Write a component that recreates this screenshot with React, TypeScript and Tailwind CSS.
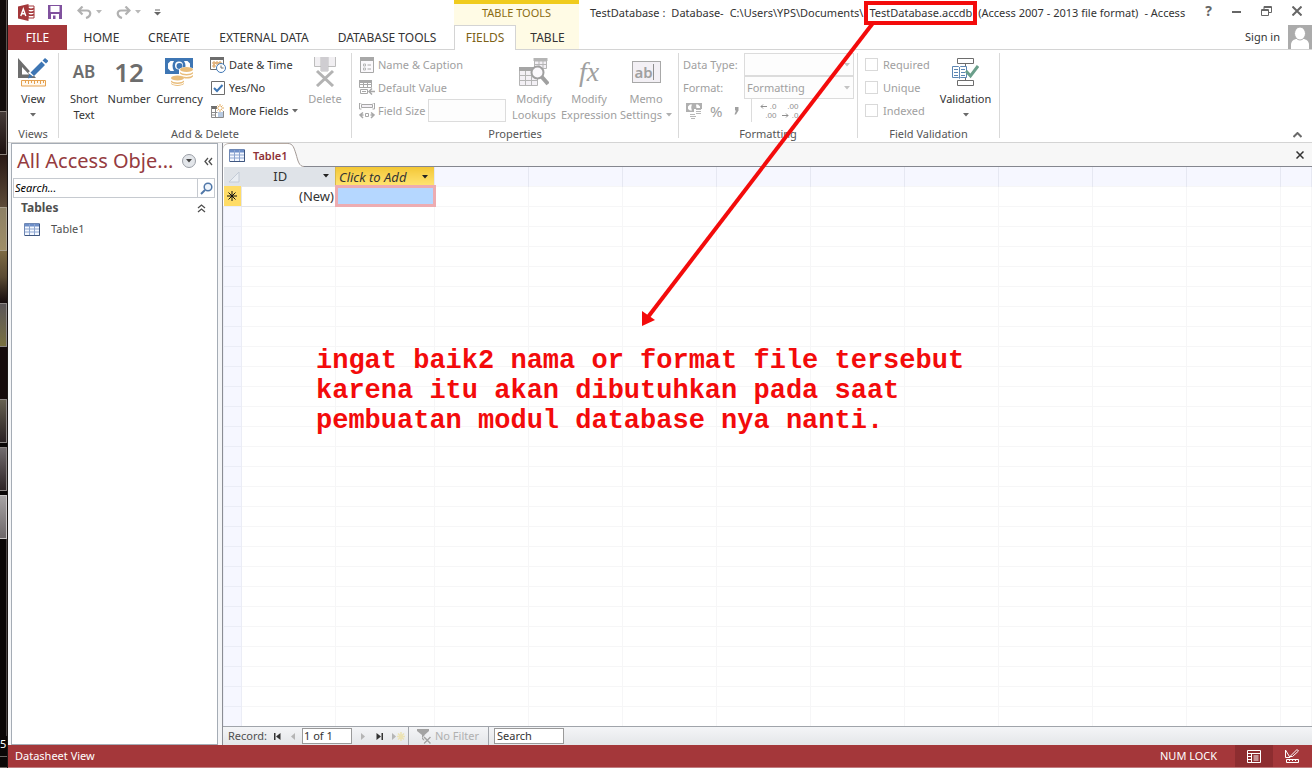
import type { ReactNode } from "react";

type IconProps = { className?: string };

const Caret = ({ className = "text-[#6a6a6a]" }: IconProps) => (
    <svg width="6" height="4" viewBox="0 0 6 4" className={`shrink-0 ${className}`}>
        <path d="M0 0h6L3 3.5z" fill="currentColor" />
    </svg>
);

/* ---------- Title bar icons ---------- */

const AccessLogo = () => (
    <svg width="17" height="17" viewBox="0 0 17 17">
        <path d="M10 2h6v12h-6z" fill="#fff" stroke="#a4373a" strokeWidth="1" />
        <path d="M10 4.5c2 1 4 1 6 0M10 7.5c2 1 4 1 6 0M10 10.5c2 1 4 1 6 0" stroke="#a4373a" strokeWidth="1.5" fill="none" />
        <path d="M0 2.5 10.5 0v17L0 14.5z" fill="#a4373a" />
        <path d="M2.8 12 5.3 5l2.5 7M3.7 9.8h3.2" stroke="#fff" strokeWidth="1.4" fill="none" />
    </svg>
);

const SaveIcon = () => (
    <svg width="14" height="14" viewBox="0 0 14 14">
        <path d="M0 0h14v14H0z" fill="#80519e" />
        <path d="M2.5 1h9v6h-9zM3 9h8v5H3z" fill="#fff" />
        <path d="M5 10.5h2.5V14H5z" fill="#80519e" />
    </svg>
);

const UndoIcon = ({ className = "" }: IconProps) => (
    <svg width="15" height="13" viewBox="0 0 15 13" className={className}>
        <path d="M5.5.5 1.5 4.5l4 4M1.5 4.5H10c4.5 0 4.5 6-1 7.5" fill="none" stroke="#b1b1b1" strokeWidth="2.2" />
    </svg>
);

/* ---------- Ribbon icons ---------- */

const ViewIcon = () => (
    <svg width="30" height="30" viewBox="0 0 30 30">
        <path d="M0 1v20h18zM4 10l7 7.5H4z" fill="#6d6d6d" fillRule="evenodd" />
        <path d="M10 16 25 1l5 4-15 14.5z" fill="#fff" />
        <path d="m12.5 15.5 11-11 3.5 3.5-11 11zM24.5 3.5 27 1l3.5 3L28 6.5zM11.5 17l3.5 3-5 1.5z" fill="#3e76b4" />
        <path d="M3.5 23.5h24V29h-24z" fill="#fff8ee" stroke="#e5a14f" />
        <path d="M7.5 24v2M10.5 24v3M13.5 24v2M16.5 24v3M19.5 24v2M22.5 24v3M25.5 24v2" stroke="#e5a14f" />
    </svg>
);

const CurrencyIcon = () => (
    <svg width="30" height="28" viewBox="0 0 30 28">
        <path d="M0 0h28v16H0z" fill="#3e76b4" />
        <path d="M3 5.5 5.500 3H9c-2 3-2 6.500 0 10H5.500L3 10.500zM25 5.500 22.500 3H19c2 3 2 6.500 0 10h3.500l2.500-2.500z" fill="#fff" />
        <circle cx="14" cy="7.500" r="4" fill="#fff" />
        <circle cx="14.500" cy="8" r="3" fill="#3e76b4" />
        <path d="M14 12c0-4 15-4 15 0v9c0 3-9 3-10 1v4c-2 3-14 3-14-1v-5c0-3 5-4 9-3z" fill="#fff" />
        <g fill="#e9bd7b">
            <ellipse cx="21.500" cy="11.500" rx="6.500" ry="2.500" />
            <path d="M15 14c2 2.500 11 2.500 13 0v1.500c-2 2.500-11 2.500-13 0zM15 17c2 2.500 11 2.500 13 0v1.500c-2 2.500-8 2.500-9 1.500z" />
            <ellipse cx="12.500" cy="20" rx="6.500" ry="2.500" />
            <path d="M6 22.500c2 2.500 11 2.500 13 0V24c-2 2.500-11 2.500-13 0zM6 25c2 2.500 11 2.500 13 0v.8c-2 2.800-11 2.800-13 0z" />
        </g>
    </svg>
);

const DateIcon = () => (
    <svg width="16" height="16" viewBox="0 0 16 16">
        <path d="M.5.5h13v12H.5z" fill="#fff" stroke="#6d6d6d" />
        <path d="M0 0h14v3H0z" fill="#6d6d6d" />
        <path d="M3 5h2v2H3zM6 5h2v2H6zM9 5h2v2H9zM3 8h2v2H3z" fill="none" stroke="#d89b54" />
        <circle cx="11" cy="11" r="4.5" fill="#fff" stroke="#3e76b4" />
        <path d="M11 8.5V11h2.5" fill="none" stroke="#6d6d6d" />
    </svg>
);

const YesNoIcon = () => (
    <svg width="14" height="14" viewBox="0 0 14 14">
        <path d="M.5.5h13v13H.5z" fill="#fff" stroke="#6d6d6d" />
        <path d="m3 7 3 3 5.5-6" fill="none" stroke="#3e76b4" strokeWidth="2" />
    </svg>
);

const MoreFieldsIcon = () => (
    <svg width="14" height="14" viewBox="0 0 14 14">
        <path d="M.5 2.5h12v11H.5z" fill="#fff" />
        <path d="M0 2h6v3H0z" fill="#6d6d6d" />
        <path d="M.5 3v10.5h12V7M.5 8.5h6M4.5 5v8M.5 11h4" fill="none" stroke="#8a8a8a" />
        <path d="M7 8h5v5H7z" fill="#b9cbe2" />
        <path d="M9 0v8M5.5 4H13M6.5 1.5l5 5M11.5 1.5l-5 5" stroke="#e3ac60" />
        <circle cx="9" cy="4" r="1.5" fill="#fff" />
    </svg>
);

const DeleteIcon = () => (
    <svg width="22" height="30" viewBox="0 0 22 30">
        <path d="M.5 0v9.5h21V0M7 0v14h7V0" fill="#f1eff2" stroke="#bdbdbd" />
        <path d="M7 0h7v14H7z" fill="#cfcdd1" />
        <path d="m3 14 16 15M19 14 3 29" stroke="#b3b3b3" strokeWidth="3" />
    </svg>
);

const CaptionIcon = () => (
    <svg width="14" height="16" viewBox="0 0 14 16">
        <path d="M.5.5h13v15H.5z" fill="#fbf9fc" stroke="#a8a8a8" />
        <path d="M0 0h14v4H0z" fill="#a8a8a8" />
        <path d="M3.5 7h2v2h-2zM3.5 11h2v2h-2z" fill="#fff" stroke="#a8a8a8" strokeWidth=".8" />
        <path d="M7.5 8H11M7.5 12H11" stroke="#a8a8a8" />
    </svg>
);

const DefaultValueIcon = () => (
    <svg width="16" height="15" viewBox="0 0 16 15">
        <path d="M.5 1.5h12v6H.5zM.5 4.5h12M4.5 1v6M8.5 1v6" fill="none" stroke="#a8a8a8" />
        <path d="M0 0h13v3H0z" fill="#a8a8a8" />
        <path d="M1.5 9.5h7v4h-7zM3 11.5h4" fill="#fff" stroke="#a8a8a8" />
        <path d="M16 11.5h-5M13 8.5l-3 3 3 3" fill="none" stroke="#a8a8a8" strokeWidth="1.5" />
    </svg>
);

const FieldSizeIcon = () => (
    <svg width="16" height="16" viewBox="0 0 16 16">
        <path d="M2.5 0H.5v6h2M13.5 0h2v6h-2" fill="none" stroke="#a8a8a8" />
        <path d="M2.5 1.5h11v3h-11z" fill="#f3f0f5" stroke="#a8a8a8" />
        <path d="M4 9.5 1 12l3 3M12 9.5l3 2.5-3 3M1 12h3.5M11.5 12H15" fill="none" stroke="#a8a8a8" strokeWidth="1.5" />
        <path d="M6.5 10.5h3v3h-3z" fill="#fff" stroke="#a8a8a8" />
    </svg>
);

const LookupIcon = () => (
    <svg width="30" height="28" viewBox="0 0 30 28">
        <path d="M15.5.5h12v10h-12z" fill="#f3f0f5" stroke="#b5b5b5" />
        <path d="M15 0h13v3H15zM20 3v7M24 3v7M15 6.5h12" fill="#b5b5b5" stroke="#b5b5b5" />
        <path d="M.5 9.5h18v18H.5z" fill="#f3f0f5" stroke="#b5b5b5" />
        <path d="M0 9h18v4H0z" fill="#a5a5a5" />
        <path d="M6.5 13v14M12.5 13v14M0 17.5h18M0 22.5h18" stroke="#b5b5b5" />
        <path d="m22 18 7 8" stroke="#a0a0a0" strokeWidth="4" />
        <circle cx="18.5" cy="14.5" r="6" fill="#fbf9fc" stroke="#a0a0a0" strokeWidth="2" />
    </svg>
);

const MoneySmallIcon = () => (
    <svg width="16" height="16" viewBox="0 0 16 16">
        <path d="M0 0h16v9H0z" fill="#b0b0b0" />
        <path d="M2 3.5 4 1.5h2c-1 2-1 4 0 6H4L2 6zM10 1.5h2l2 2V5h-3.5z" fill="#fff" />
        <path d="M8 6h8v8H8z" fill="#fff" />
        <path d="M10 6.5h5M10 8.5h5M10 10.5h5M4 11.5h5M4 13.5h6M5 15.5h4" stroke="#b8b8b8" />
    </svg>
);

const ValidationIcon = () => (
    <svg width="27" height="28" viewBox="0 0 27 28">
        <path d="M5.5.5h16v5h-16zM5.5 22.5h16v5h-16z" fill="#fff" stroke="#6d6d6d" />
        <path d="M13.5 6v3M13.5 20v3" stroke="#6d6d6d" />
        <path d="M.5 8.5h6l1 1 1-1h6v11h-6l-1 1-1-1h-6z" fill="#fff" stroke="#5d87b3" />
        <path d="M7.5 9v11M2 11.5h4M2 14.5h4M2 17.5h4M9 11.5h4M9 14.5h4M9 17.5h4" stroke="#5d87b3" />
        <path d="m14 13 4.5 5L26 8" fill="none" stroke="#6b9f8b" strokeWidth="3" />
    </svg>
);

const Arrow = ({ flip = false }: { flip?: boolean }) => (
    <svg width="7" height="5" viewBox="0 0 7 5" className={flip ? "rotate-180" : ""}>
        <path d="M7 2.5H1M3 .5l-2 2 2 2" fill="none" stroke="#8f8f8f" />
    </svg>
);

const DecimalIcon = ({ more = false }: { more?: boolean }) => (
    <span className="flex w-4 flex-col font-['Liberation_Sans',sans-serif] text-[8px] leading-[9px] text-[#8f8f8f]">
        <span className="flex items-center justify-between">
            {more ? <i className="w-1" /> : <Arrow />}
            {more ? ".00" : ".0"}
        </span>
        <span className="flex items-center justify-between">
            {more ? <Arrow flip /> : <i className="w-1" />}
            {more ? ".0" : ".00"}
        </span>
    </span>
);

/* ---------- Object icons ---------- */

const TableIcon = () => (
    <svg width="16" height="13" viewBox="0 0 16 13" className="shrink-0">
        <path d="M.5.5h15v12H.5z" fill="#f4f8ff" stroke="#6f88b5" />
        <path d="M1 1h14v2.5H1z" fill="#6d8fc9" />
        <path d="M1 6h14M1 9h14M5.5 1v11M10.5 1v11" stroke="#8ba4cf" />
        <path d="M15.5 1v11.5H1" fill="none" stroke="#3f567f" />
    </svg>
);

const DoubleChevron = ({ className = "" }: IconProps) => (
    <svg width="9" height="9" viewBox="0 0 9 9" className={className}>
        <path d="M4 1 1 4.5 4 8M8 1 5 4.5 8 8" fill="none" stroke="#4f4f4f" strokeWidth="1.3" />
    </svg>
);

const FilterIcon = () => (
    <svg width="15" height="15" viewBox="0 0 15 15">
        <path d="M0 0h12v2L7.5 6v6L5 10V6L0 2z" fill="#a3a3a3" />
        <path d="m6.5 7.5 7 7M13.5 7.5l-7 7" stroke="#f0f1f3" strokeWidth="3" />
        <path d="m7 8 6.5 6.5M13.5 8 7 14.5" stroke="#a3a3a3" strokeWidth="1.5" />
    </svg>
);

/* ---------- Ribbon parts ---------- */

const RibbonGroup = ({ label, className, children }: { label: string; className: string; children: ReactNode }) => (
    <section className={`flex h-[85px] shrink-0 flex-col border-r border-[#d9d9d9] ${className}`}>
        <div className="flex h-[73px]">{children}</div>
        <h2 className="h-3 text-center leading-4 text-[#555]">{label}</h2>
    </section>
);

type BigButtonProps = { icon: ReactNode; lines: string[]; className: string; caret?: "below" | "inline" };

const BigButton = ({ icon, lines, className, caret }: BigButtonProps) => (
    <button className={`flex shrink-0 flex-col items-center leading-4 whitespace-nowrap ${className}`}>
        <span className="flex h-[38px] items-center justify-center">{icon}</span>
        {lines.map((line, i) => (
            <span key={line} className="flex items-center gap-1">
                {line}
                {caret === "inline" && i === lines.length - 1 && <Caret className="text-[#b0b0b0]" />}
            </span>
        ))}
        {caret === "below" && <span className="flex h-4 items-center"><Caret /></span>}
    </button>
);

const SmallButton = ({ icon, label, caret }: { icon: ReactNode; label: string; caret?: boolean }) => (
    <button className="flex h-[23px] items-center gap-[3px] whitespace-nowrap">
        <span className="flex w-4 justify-center">{icon}</span>
        {label}
        {caret && <Caret />}
    </button>
);

const FormatSelect = ({ id, value }: { id: string; value: string }) => (
    <span className="relative flex h-[23px] w-[110px] items-center">
        <select id={id} defaultValue={value} className="h-full w-full appearance-none border border-[#dcdcdc] bg-[#fdfdfd] px-[2px] text-[#a0a0a0]">
            <option>{value}</option>
        </select>
        <span className="pointer-events-none absolute right-1"><Caret className="text-[#c4c4c4]" /></span>
    </span>
);

/* ---------- Page sections ---------- */

const Taskbar = () => (
    <aside className="flex w-2 shrink-0 flex-col overflow-hidden border-r border-[#1b1615] bg-[#0a0606] text-white">
        <div className="h-[111px] border-r border-[#5c5450] bg-[#120c0b]" />
        <div className="h-11 border border-l-0 border-[#8b827c] bg-linear-to-b from-[#453b38] to-[#1d1110]" />
        <div className="h-[52px] bg-linear-to-b from-[#2a1a16] to-[#5d4b38]" />
        <div className="h-11 border border-l-0 border-[#aaa08d] bg-linear-to-b from-[#8d8065] to-[#a08f68]" />
        <div className="h-[52px] bg-linear-to-b from-[#7d6a43] via-[#5a4a33] to-[#160c0d]" />
        <div className="h-11 border border-l-0 border-[#8d8786] bg-linear-to-b from-[#5b5557] to-[#7a7140]" />
        <div className="h-[52px] bg-[#150b0c]" />
        <div className="h-11 border border-l-0 border-[#8d8786] bg-linear-to-b from-[#666050] to-[#2a2123]" />
        <div className="mt-1 h-11 border border-l-0 border-[#8d8786] bg-linear-to-b from-[#726c6e] to-[#2e2426]" />
        <div className="mt-1 h-11 border border-l-0 border-[#c9c5c5] bg-linear-to-b from-[#a7a3a4] to-[#6e686a]" />
        <div className="flex-1 border-r border-[#4c4645]" />
        <div className="h-5 leading-4">5</div>
        <div className="h-3 border-y border-[#6b6563]" />
    </aside>
);

const Header = () => (
    <header className="flex h-[50px] shrink-0 whitespace-nowrap">
        <div className="flex w-[446px] shrink-0 flex-col">
            <div className="flex h-6 items-center pl-[10px]">
                <AccessLogo />
                <button aria-label="Save" className="ml-[13px]"><SaveIcon /></button>
                <button aria-label="Undo" className="ml-[15px] flex items-center gap-1">
                    <UndoIcon /><Caret className="text-[#b8b8b8]" />
                </button>
                <button aria-label="Redo" className="ml-[14px] flex items-center gap-1">
                    <UndoIcon className="-scale-x-100" /><Caret className="text-[#b8b8b8]" />
                </button>
                <button aria-label="Customize toolbar" className="ml-[13px]">
                    <svg width="7" height="7" viewBox="0 0 7 7"><path d="M1 1h5" stroke="#666" /><path d="M0 3h7L3.500 6.500z" fill="#666" /></svg>
                </button>
            </div>
            <nav className="mt-px flex h-[25px] text-[12px]">
                <button className="w-[59px] bg-[#a4373a] text-white">FILE</button>
                <div className="flex flex-1 border-b border-[#d4d4d4] pt-[2px]">
                    <button className="w-[69px]">HOME</button>
                    <button className="w-[66px]">CREATE</button>
                    <button className="w-[124px]">EXTERNAL DATA</button>
                    <button className="w-[122px]">DATABASE TOOLS</button>
                </div>
            </nav>
        </div>
        <div className="flex w-[125px] shrink-0 flex-col border-t-4 border-[#f0cb1d] bg-[#fffbe5]">
            <div className="flex h-[21px] items-center justify-center pb-[3px] text-[#8b6c12]">TABLE TOOLS</div>
            <div className="flex h-[25px] text-[12px]">
                <button className="w-[62px] border border-b-0 border-[#d4d4d4] bg-white text-[#7d6216]">FIELDS</button>
                <button className="flex-1 border-b border-[#d4d4d4] pt-[2px]">TABLE</button>
            </div>
        </div>
        <div className="flex min-w-0 flex-1 flex-col border-b border-[#d4d4d4]">
            <div className="flex h-[25px] items-center justify-between pr-[10px] pl-[11px]">
                <h1 className="flex gap-[6px]">
                    <span>TestDatabase :</span>
                    <span>Database-</span>
                    <span>C:\Users\YPS\Documents\</span>
                    <span className="relative">
                        TestDatabase.accdb
                        <span className="absolute -inset-x-[5px] -inset-y-1 border-4 border-[#f30b0b]" />
                    </span>
                    <span>(Access 2007 - 2013 file format)</span>
                    <span>- Access</span>
                </h1>
                <div className="flex items-center gap-5 pb-[3px] text-[#666]">
                    <button aria-label="Help" className="text-[14px] leading-4 font-bold">?</button>
                    <button aria-label="Minimize">
                        <svg width="9" height="10" viewBox="0 0 9 10"><path d="M0 6h9" stroke="currentColor" strokeWidth="2" /></svg>
                    </button>
                    <button aria-label="Restore">
                        <svg width="11" height="10" viewBox="0 0 11 10"><path d="M.5 3.5h7v6h-7zM3 3V.5h7.5v6H8M.5 4.5h7M3 1.5h7" fill="none" stroke="currentColor" /></svg>
                    </button>
                    <button aria-label="Close">
                        <svg width="10" height="10" viewBox="0 0 10 10"><path d="m.5.5 9 9M9.500.500l-9 9" stroke="currentColor" strokeWidth="2" /></svg>
                    </button>
                </div>
            </div>
            <div className="flex h-6 items-center justify-end gap-2">
                <a href="#signin">Sign in</a>
                <svg width="24" height="24" viewBox="0 0 24 24">
                    <path d="M0 0h24v24H0z" fill="#ababab" />
                    <path d="M3 24v-4c0-4 3-6 6-6h6c3 0 6 2 6 6v4z" fill="#fff" />
                    <ellipse cx="12" cy="8.5" rx="5.5" ry="6.5" fill="#fff" stroke="#ababab" />
                </svg>
            </div>
        </div>
    </header>
);

const Ribbon = () => (
    <div className="flex h-[93px] shrink-0 border-b border-[#d4d4d4] pt-[3px]">
        <RibbonGroup label="Views" className="w-[51px]">
            <BigButton icon={<ViewIcon />} lines={["View"]} caret="below" className="w-[50px]" />
        </RibbonGroup>

        <RibbonGroup label="Add & Delete" className="w-[293px]">
            <BigButton icon={<span className="text-[17px] font-semibold text-[#6d6d6d]">AB</span>} lines={["Short", "Text"]} className="w-[50px]" />
            <BigButton icon={<span className="text-[26px] font-semibold text-[#6d6d6d]">12</span>} lines={["Number"]} className="w-10" />
            <BigButton icon={<CurrencyIcon />} lines={["Currency"]} className="w-[61px]" />
            <div className="w-[89px]">
                <SmallButton icon={<DateIcon />} label="Date & Time" />
                <SmallButton icon={<YesNoIcon />} label="Yes/No" />
                <SmallButton icon={<MoreFieldsIcon />} label="More Fields" caret />
            </div>
            <BigButton icon={<DeleteIcon />} lines={["Delete"]} className="w-[52px] text-[#a0a0a0]" />
        </RibbonGroup>

        <RibbonGroup label="Properties" className="w-[327px] text-[#a0a0a0]">
            <div className="w-[152px] pl-[7px]">
                <SmallButton icon={<CaptionIcon />} label="Name & Caption" />
                <SmallButton icon={<DefaultValueIcon />} label="Default Value" />
                <div className="flex h-[23px] items-center gap-[3px] whitespace-nowrap">
                    <span className="w-4"><FieldSizeIcon /></span>
                    <label htmlFor="field-size" className="w-[50px]">Field Size</label>
                    <input id="field-size" className="h-[23px] w-[78px] shrink-0 border border-[#dcdcdc] bg-[#fdfdfd]" />
                </div>
            </div>
            <BigButton icon={<LookupIcon />} lines={["Modify", "Lookups"]} className="w-[60px]" />
            <BigButton
                icon={<span className="font-['Liberation_Serif',serif] text-[28px] italic">fx</span>}
                lines={["Modify", "Expression"]}
                className="w-[50px]"
            />
            <BigButton
                icon={<span className="flex h-[22px] w-[29px] items-center border border-[#a8a8a8] bg-[#f3f0f5] px-[2px] text-[15px] font-semibold">ab<i className="h-4 w-px bg-[#8f8f8f]" /></span>}
                lines={["Memo", "Settings"]}
                caret="inline"
                className="w-16"
            />
        </RibbonGroup>

        <RibbonGroup label="Formatting" className="w-[179px] text-[#a0a0a0]">
            <div className="flex flex-col pl-1">
                <div className="flex items-center">
                    <label htmlFor="data-type" className="w-[61px]">Data Type:</label>
                    <FormatSelect id="data-type" value="" />
                </div>
                <div className="flex items-center">
                    <label htmlFor="format" className="w-[61px]">Format:</label>
                    <FormatSelect id="format" value="Formatting" />
                </div>
                <div className="flex h-[23px] items-center pl-[3px]">
                    <button aria-label="Currency format"><MoneySmallIcon /></button>
                    <button className="ml-2 text-[15px] leading-4">%</button>
                    <button aria-label="Comma format" className="ml-3">
                        <svg width="5" height="9" viewBox="0 0 5 9"><path d="M1 1h3.500v3.500L2 8.500H.5L2 4.500H1z" fill="#a0a0a0" /></svg>
                    </button>
                    <i className="ml-3 h-[23px] w-px bg-[#dcdcdc]" />
                    <button aria-label="Increase decimals" className="ml-2"><DecimalIcon /></button>
                    <button aria-label="Decrease decimals" className="ml-[6px]"><DecimalIcon more /></button>
                </div>
            </div>
        </RibbonGroup>

        <RibbonGroup label="Field Validation" className="w-[142px]">
            <div className="w-[75px] pl-[7px] text-[#a0a0a0]">
                {["Required", "Unique", "Indexed"].map((name) => (
                    <label key={name} className="flex h-[23px] items-center gap-[5px]">
                        <input type="checkbox" className="size-[13px] appearance-none border border-[#d9d9d9]" />
                        {name}
                    </label>
                ))}
            </div>
            <BigButton icon={<ValidationIcon />} lines={["Validation"]} caret="below" className="w-[65px]" />
        </RibbonGroup>

        <button aria-label="Collapse the ribbon" className="mr-[10px] mb-1 ml-auto self-end">
            <svg width="9" height="6" viewBox="0 0 9 6"><path d="m.5 5 4-4 4 4" fill="none" stroke="#6a6a6a" strokeWidth="2" /></svg>
        </button>
    </div>
);

const NavigationPane = () => (
    <nav className="flex w-[214px] shrink-0 bg-[#f4f5f7] pr-1 pl-[3px]">
        <div className="flex flex-1 flex-col border border-[#a5acb5] bg-white pr-[2px] pl-px whitespace-nowrap">
            <div className="flex h-[34px] items-center pr-[2px] pl-1">
                <h2 className="flex-1 text-[20px] leading-8 text-[#953b40]">All Access Obje...</h2>
                <button aria-label="Select category" className="flex size-[14px] items-center justify-center rounded-full border border-[#9a9ea6] bg-[#e3e6ea]">
                    <Caret className="text-[#444]" />
                </button>
                <button aria-label="Close pane" className="ml-2"><DoubleChevron /></button>
            </div>
            <div className="flex h-5 border border-[#c6cad0]">
                <input aria-label="Search" placeholder="Search..." className="min-w-0 flex-1 px-px italic placeholder:text-black" />
                <button aria-label="Search objects" className="flex w-[17px] items-center justify-center border-l border-[#c6cad0]">
                    <svg width="13" height="13" viewBox="0 0 13 13">
                        <circle cx="8" cy="5" r="3.800" fill="#eef4fb" stroke="#5077a8" strokeWidth="1.5" />
                        <path d="M5 8 1 12" stroke="#5077a8" strokeWidth="2" />
                    </svg>
                </button>
            </div>
            <button className="flex h-5 items-center justify-between pr-[9px] pl-2 text-[12px] font-bold text-[#4f4f4f]">
                Tables
                <DoubleChevron className="rotate-90" />
            </button>
            <a href="#table1" className="flex h-[22px] items-center gap-[11px] pl-[11px] text-[#4f4f4f]">
                <TableIcon />
                Table1
            </a>
        </div>
    </nav>
);

const emptyColumns = Array.from({ length: 10 }, (_, i) => i);
const emptyRows = Array.from({ length: 60 }, (_, i) => i);

const Datasheet = () => (
    <div className="min-h-0 flex-1 basis-0 overflow-hidden">
        <table className="w-full table-fixed border-collapse">
            <colgroup>
                <col className="w-[18px]" />
                <col className="w-[94px]" />
                <col className="w-[99px]" />
                {emptyColumns.map((c) => (
                    <col key={c} className={c < 9 ? "w-[94px]" : ""} />
                ))}
            </colgroup>
            <thead>
                <tr className="h-[19px] bg-[#f6f7ff]">
                    <th className="bg-[#dfe3e8] p-0">
                        <svg width="12" height="12" viewBox="0 0 12 12" className="ml-1"><path d="M11 1v10H1z" fill="#e9edf2" stroke="#c3cbd6" /></svg>
                    </th>
                    <th className="bg-[#dfe3e8] p-0 font-normal">
                        <button className="flex w-full items-center pr-[6px] text-[13px] leading-4">
                            <span className="flex-1 pr-1">ID</span>
                            <Caret className="text-[#222]" />
                        </button>
                    </th>
                    <th className="border-l border-[#d8b94a] bg-linear-to-b from-[#f3c733] to-[#ffe471] p-0 font-normal">
                        <button className="flex w-full items-center justify-between pr-[6px] pl-[3px] text-[13px] leading-4 italic">
                            Click to Add
                            <Caret className="text-[#222]" />
                        </button>
                    </th>
                    {emptyColumns.map((c) => (
                        <th key={c} className="border-x border-[#e6e8f2] p-0" />
                    ))}
                </tr>
            </thead>
            <tbody>
                <tr className="h-5">
                    <td className="bg-[#ffdc66] p-0 text-center">
                        <svg width="10" height="10" viewBox="0 0 10 10" className="mx-auto"><path d="M5 0v10M0 5h10M1.500 1.500l7 7M8.500 1.500l-7 7" stroke="#111" /></svg>
                    </td>
                    <td className="border border-[#e3e5ea] p-0 pr-px text-right text-[13px] leading-4">(New)</td>
                    <td className="bg-[#b5d7ff] p-0 outline-3 -outline-offset-2 outline-[#edacb1]" />
                    {emptyColumns.map((c) => (
                        <td key={c} className="border border-[#f6f6f7] p-0" />
                    ))}
                </tr>
                {emptyRows.map((r) => (
                    <tr key={r} className="h-5">
                        <td className="border border-[#ebedf6] bg-[#f6f7ff] p-0" />
                        <td className="border border-[#f6f6f7] p-0" />
                        <td className="border border-[#f6f6f7] p-0" />
                        {emptyColumns.map((c) => (
                            <td key={c} className="border border-[#f6f6f7] p-0" />
                        ))}
                    </tr>
                ))}
            </tbody>
        </table>
    </div>
);

const RecordBar = () => (
    <div className="flex h-[19px] shrink-0 items-center border-t border-[#a0a4aa] bg-linear-to-b from-[#f4f5f7] to-[#e4e6e9] pl-[5px] leading-4">
        <span className="w-[46px] text-[#4f4f4f]">Record:</span>
        <button aria-label="First record" className="w-[15px]">
            <svg width="7" height="7" viewBox="0 0 7 7"><path d="M0 0h1.500v7H0zM6.500 0v7L2 3.500z" fill="#333" /></svg>
        </button>
        <button aria-label="Previous record" className="w-[13px]">
            <svg width="7" height="7" viewBox="0 0 7 7"><path d="M6 0v7L2 3.500z" fill="#b5b5b5" /></svg>
        </button>
        <input aria-label="Current record" defaultValue="1 of 1" className="h-4 w-[50px] border border-[#9a9a9a] bg-white px-px" />
        <button aria-label="Next record" className="ml-2 w-4">
            <svg width="7" height="7" viewBox="0 0 7 7"><path d="M1 0v7l4-3.500z" fill="#b5b5b5" /></svg>
        </button>
        <button aria-label="Last record" className="w-4">
            <svg width="7" height="7" viewBox="0 0 7 7"><path d="M5.500 0H7v7H5.500zM.5 0v7L5 3.500z" fill="#333" /></svg>
        </button>
        <button aria-label="New record" className="w-4">
            <svg width="13" height="9" viewBox="0 0 13 9"><path d="M0 1v7l4-3.500z" fill="#b5b5b5" /><path d="M9 0v9M5 4.500h8M6 1.500l6 6M12 1.500l-6 6" stroke="#ece3b4" strokeWidth="1.5" /></svg>
        </button>
        <i className="h-full w-px bg-[#a0a4aa]" />
        <button className="flex w-[79px] items-center gap-[3px] pl-2 whitespace-nowrap text-[#b0b0b0]">
            <FilterIcon />
            No Filter
        </button>
        <i className="h-full w-px bg-[#a0a4aa]" />
        <input aria-label="Search records" defaultValue="Search" className="ml-[5px] h-4 w-[70px] border border-[#9a9a9a] bg-white px-[2px]" />
    </div>
);

const Document = () => (
    <main className="relative flex min-w-0 flex-1 flex-col border-l border-[#8b8d94]">
        <div className="flex h-6 shrink-0 bg-[#f7f7f7]">
            <button className="flex items-center gap-2 rounded-tl-md border-t border-[#b4a8a0] bg-white pl-[6px] font-semibold text-[#8e3237]">
                <TableIcon />
                Table1
            </button>
            <svg width="16" height="24" viewBox="0 0 16 24" className="shrink-0">
                <path d="M0 .5C5 .5 6 5 8 11c2 7 3 12.500 8 12.500V24H0z" fill="#fff" />
                <path d="M0 .5C5 .5 6 5 8 11c2 7 3 12.500 8 12.500" fill="none" stroke="#a39a96" />
            </svg>
            <div className="flex flex-1 items-center justify-end border-b border-[#85878f] pr-2">
                <button aria-label="Close tab">
                    <svg width="8" height="8" viewBox="0 0 8 8"><path d="m.5.5 7 7M7.500.500l-7 7" stroke="#333" strokeWidth="1.5" /></svg>
                </button>
            </div>
        </div>
        <Datasheet />
        <RecordBar />
        <p className="absolute top-[203px] left-[93px] font-['Liberation_Mono',monospace] text-[27px] leading-[30px] font-bold whitespace-pre text-[#f30b0b]">
            {"ingat baik2 nama or format file tersebut\nkarena itu akan dibutuhkan pada saat\npembuatan modul database nya nanti."}
        </p>
        <svg width="240" height="304" viewBox="0 0 240 304" className="absolute -top-[120px] left-[417px]">
            <path d="M233 0 8 294" stroke="#f30b0b" strokeWidth="4" />
            <path d="M2 303V288l13 9z" fill="#f30b0b" />
        </svg>
    </main>
);

const StatusBar = () => (
    <footer className="flex h-[23px] shrink-0 items-stretch border-b border-[#c27d80] bg-[#a4373a] text-white">
        <span className="flex flex-1 items-center pl-[7px]">Datasheet View</span>
        <span className="flex w-[75px] items-center">NUM LOCK</span>
        <button aria-label="Datasheet view" className="flex w-[38px] items-center justify-center bg-[#8d2d30]">
            <svg width="14" height="13" viewBox="0 0 14 13"><path d="M.5.5h13v12H.5zM0 3.5h14M4.500 3v9M6.500 6h5M6.500 8h5M6.500 10h5M1 6.500h3M1 9.500h3" fill="none" stroke="#fff" /></svg>
        </button>
        <button aria-label="Design view" className="flex w-[39px] items-center justify-center">
            <svg width="15" height="14" viewBox="0 0 15 14">
                <path d="M.5 1v7.500H5zM5 7.500l7-7 1.500 1.500-6 5.500zM1.500 10.500h12v3h-12zM4.500 11v1M7.500 11v1M10.500 11v1" fill="none" stroke="#fff" />
            </svg>
        </button>
    </footer>
);

const App = () => {
    return (
        <div className="flex h-screen overflow-hidden bg-white font-['Noto_Sans','Open_Sans',sans-serif] text-[11px] leading-4 text-[#333]">
            <Taskbar />
            <div className="flex min-w-0 flex-1 flex-col">
                <Header />
                <Ribbon />
                <div className="flex min-h-0 flex-1">
                    <NavigationPane />
                    <Document />
                </div>
                <StatusBar />
            </div>
        </div>
    );
};

export default App;
